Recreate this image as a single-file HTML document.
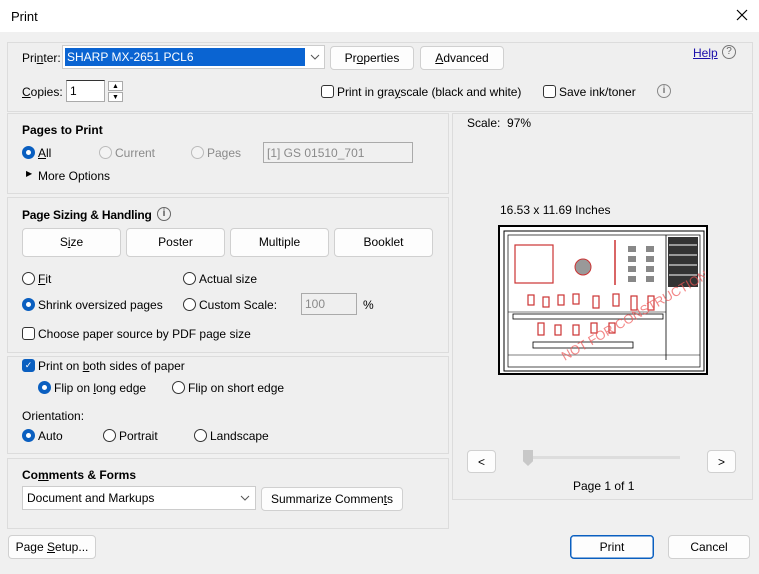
<!DOCTYPE html><html><head><style>
*{box-sizing:border-box}
body{margin:0;width:759px;height:574px;background:#f0f0f0;font-family:"Liberation Sans",sans-serif;font-size:12px;color:#000;position:relative;overflow:hidden}
.a{position:absolute;white-space:nowrap}
.panel{position:absolute;border:1px solid #dcdcdc;background:#efefef}
.btn{position:absolute;background:#fdfdfd;border:1px solid #d0d0d0;border-radius:4px;text-align:center;line-height:22px}
.rad{position:absolute;width:13px;height:13px;border:1px solid #333;border-radius:50%;background:#fff}
.rad.on{background:#0a5fc0;border-color:#0a5fc0}
.rad.on:after{content:"";position:absolute;left:3px;top:3px;width:5px;height:5px;border-radius:50%;background:#fff}
.rad.dis{border-color:#bbb;background:#f3f3f3}
.cb{position:absolute;width:13px;height:13px;border:1px solid #333;border-radius:3px;background:#fff}
.b{font-weight:bold}
.g{color:#8a8a8a}
u{text-decoration:underline}
</style></head><body>
<div class="a" style="left:0;top:0;width:759px;height:32px;background:#fff"></div>
<div class="a" style="left:11px;top:9px;font-size:13px">Print</div>
<svg class="a" style="left:736px;top:9px" width="12" height="12"><path d="M1 1L11 11M11 1L1 11" stroke="#000" stroke-width="1.2"/></svg>

<div class="panel" style="left:7px;top:42px;width:746px;height:70px"></div>
<div class="a" style="left:22px;top:51px">Pri<u>n</u>ter:</div>
<div class="a" style="left:62px;top:45px;width:263px;height:24px;background:#fff;border:1px solid #ccc"></div>
<div class="a" style="left:65px;top:48px;width:240px;height:18px;background:#0a64d2;color:#fff;padding-left:2px;line-height:18px">SHARP MX-2651 PCL6</div>
<svg class="a" style="left:310px;top:54px" width="10" height="6"><path d="M1 1L5 5L9 1" stroke="#555" fill="none"/></svg>
<div class="btn" style="left:330px;top:46px;width:84px;height:24px">Pr<u>o</u>perties</div>
<div class="btn" style="left:420px;top:46px;width:84px;height:24px"><u>A</u>dvanced</div>
<div class="a" style="left:693px;top:46px;color:#1a0dab;text-decoration:underline">Help</div>
<div class="a" style="left:722px;top:45px;width:14px;height:14px;border:1px solid #777;border-radius:50%;font-size:10px;text-align:center;line-height:12px;color:#666">?</div>
<div class="a" style="left:22px;top:85px"><u>C</u>opies:</div>
<div class="a" style="left:66px;top:80px;width:39px;height:22px;background:#fff;border:1px solid #aaa;border-top-color:#333;padding:3px">1</div>
<div class="a" style="left:108px;top:81px;width:15px;height:10px;border:1px solid #aaa;background:#fff;font-size:7px;text-align:center;line-height:9px">▲</div>
<div class="a" style="left:108px;top:92px;width:15px;height:10px;border:1px solid #aaa;background:#fff;font-size:7px;text-align:center;line-height:9px">▼</div>
<div class="cb" style="left:321px;top:85px"></div>
<div class="a" style="left:337px;top:85px;letter-spacing:-0.05px">Print in gra<u>y</u>scale (black and white)</div>
<div class="cb" style="left:543px;top:85px"></div>
<div class="a" style="left:559px;top:85px">Save ink/toner</div>
<div class="a" style="left:657px;top:84px;width:14px;height:14px;border:1px solid #888;border-radius:50%;font-size:10px;text-align:center;line-height:12px;color:#777;font-weight:bold">i</div>

<div class="panel" style="left:7px;top:113px;width:442px;height:81px"></div>
<div class="a b" style="left:22px;top:123px">Pages to Print</div>
<div class="rad on" style="left:22px;top:146px"></div><div class="a" style="left:38px;top:146px"><u>A</u>ll</div>
<div class="rad dis" style="left:99px;top:146px"></div><div class="a g" style="left:115px;top:146px">Current</div>
<div class="rad dis" style="left:191px;top:146px"></div><div class="a g" style="left:207px;top:146px">Pages</div>
<div class="a g" style="left:263px;top:142px;width:150px;height:21px;border:1px solid #aaa;background:#f0f0f0;padding:3px 3px">[1] GS 01510_701</div>
<div class="a" style="left:26px;top:169px;font-size:8px">▶</div><div class="a" style="left:38px;top:169px">More Options</div>

<div class="panel" style="left:7px;top:197px;width:442px;height:156px"></div>
<div class="a b" style="left:22px;top:208px;letter-spacing:-0.2px">Page Sizing &amp; Handling</div>
<div class="a" style="left:157px;top:207px;width:14px;height:14px;border:1px solid #666;border-radius:50%;font-size:10px;text-align:center;line-height:12px;font-weight:bold;color:#555">i</div>
<div class="btn" style="left:22px;top:228px;width:99px;height:29px;line-height:27px">S<u>i</u>ze</div>
<div class="btn" style="left:126px;top:228px;width:99px;height:29px;line-height:27px">Poster</div>
<div class="btn" style="left:230px;top:228px;width:99px;height:29px;line-height:27px">Multiple</div>
<div class="btn" style="left:334px;top:228px;width:99px;height:29px;line-height:27px">Booklet</div>
<div class="rad" style="left:22px;top:272px"></div><div class="a" style="left:38px;top:272px"><u>F</u>it</div>
<div class="rad" style="left:183px;top:272px"></div><div class="a" style="left:199px;top:272px">Actual size</div>
<div class="rad on" style="left:22px;top:298px"></div><div class="a" style="left:38px;top:298px">Shrink oversized pages</div>
<div class="rad" style="left:183px;top:298px"></div><div class="a" style="left:199px;top:298px">Custom Scale:</div>
<div class="a g" style="left:301px;top:293px;width:56px;height:22px;border:1px solid #aaa;padding:3px">100</div>
<div class="a" style="left:363px;top:298px">%</div>
<div class="cb" style="left:22px;top:327px"></div><div class="a" style="left:38px;top:327px">Choose paper source by PDF page size</div>

<div class="panel" style="left:7px;top:356px;width:442px;height:98px"></div>
<div class="cb" style="left:22px;top:359px;background:#0a5fc0;border-color:#0a5fc0;color:#fff;font-size:9px;line-height:11px;text-align:center">✓</div>
<div class="a" style="left:38px;top:359px">Print on <u>b</u>oth sides of paper</div>
<div class="rad on" style="left:38px;top:381px"></div><div class="a" style="left:54px;top:381px">Flip on <u>l</u>ong edge</div>
<div class="rad" style="left:172px;top:381px"></div><div class="a" style="left:188px;top:381px">Flip on short edge</div>
<div class="a" style="left:22px;top:409px">Orientation:</div>
<div class="rad on" style="left:22px;top:429px"></div><div class="a" style="left:38px;top:429px">Auto</div>
<div class="rad" style="left:103px;top:429px"></div><div class="a" style="left:119px;top:429px">Portrait</div>
<div class="rad" style="left:194px;top:429px"></div><div class="a" style="left:210px;top:429px">Landscape</div>

<div class="panel" style="left:7px;top:458px;width:442px;height:71px"></div>
<div class="a b" style="left:22px;top:468px">Co<u>m</u>ments &amp; Forms</div>
<div class="a" style="left:22px;top:486px;width:234px;height:24px;background:#fff;border:1px solid #ccc;padding:4px 4px">Document and Markups</div>
<svg class="a" style="left:240px;top:495px" width="10" height="6"><path d="M1 1L5 5L9 1" stroke="#555" fill="none"/></svg>
<div class="btn" style="left:261px;top:487px;width:142px;height:24px">Summarize Commen<u>t</u>s</div>

<div class="panel" style="left:452px;top:113px;width:301px;height:387px"></div>
<div class="a" style="left:467px;top:116px">Scale:&nbsp; 97%</div>
<div class="a" style="left:500px;top:203px">16.53 x 11.69 Inches</div>
<div class="a" style="left:498px;top:225px;width:210px;height:150px;border:2px solid #000;background:#fff;padding:3px">
<svg width="202" height="142" viewBox="0 0 202 142" style="display:block">
<rect x="1" y="1" width="200" height="140" fill="none" stroke="#000"/>
<rect x="5" y="5" width="192" height="132" fill="none" stroke="#000" stroke-width="0.7"/>
<line x1="163" y1="5" x2="163" y2="130" stroke="#000" stroke-width="0.8"/>
<rect x="165" y="7" width="30" height="50" fill="#333"/>
<g stroke="#fff" stroke-width="1"><line x1="166" y1="15" x2="194" y2="15"/><line x1="166" y1="25" x2="194" y2="25"/><line x1="166" y1="35" x2="194" y2="35"/><line x1="166" y1="45" x2="194" y2="45"/></g>
<line x1="5" y1="82" x2="163" y2="82" stroke="#000" stroke-width="0.6"/>
<line x1="5" y1="125" x2="197" y2="125" stroke="#000" stroke-width="0.6"/>
<rect x="12" y="15" width="38" height="38" fill="none" stroke="#c33" stroke-width="1.2"/>
<circle cx="80" cy="37" r="8" fill="#999" stroke="#c33"/>
<g fill="#888"><rect x="125" y="16" width="8" height="6"/><rect x="125" y="26" width="8" height="6"/><rect x="125" y="36" width="8" height="6"/><rect x="125" y="46" width="8" height="6"/><rect x="143" y="16" width="8" height="6"/><rect x="143" y="26" width="8" height="6"/><rect x="143" y="36" width="8" height="6"/><rect x="143" y="46" width="8" height="6"/></g>
<line x1="112" y1="10" x2="112" y2="55" stroke="#c33" stroke-width="1.5"/>
<g fill="none" stroke="#c33" stroke-width="1.2"><rect x="25" y="65" width="6" height="10"/><rect x="40" y="67" width="6" height="10"/><rect x="55" y="65" width="6" height="10"/><rect x="70" y="64" width="6" height="10"/><rect x="90" y="66" width="6" height="12"/><rect x="110" y="64" width="6" height="12"/><rect x="128" y="66" width="6" height="14"/><rect x="145" y="66" width="6" height="14"/>
<rect x="35" y="93" width="6" height="12"/><rect x="52" y="95" width="6" height="10"/><rect x="70" y="95" width="6" height="10"/><rect x="88" y="93" width="6" height="10"/><rect x="106" y="93" width="6" height="10"/></g>
<g fill="none" stroke="#000" stroke-width="0.8"><rect x="10" y="84" width="150" height="5"/><rect x="30" y="112" width="100" height="6"/></g>
<text x="40" y="110" transform="rotate(-30 90 80)" font-size="13" fill="#e55" opacity="0.7" font-family="Liberation Sans">NOT FOR CONSTRUCTION</text>
</svg></div>
<div class="btn" style="left:467px;top:450px;width:29px;height:23px">&lt;</div>
<div class="btn" style="left:707px;top:450px;width:29px;height:23px">&gt;</div>
<div class="a" style="left:528px;top:456px;width:152px;height:3px;background:#ddd"></div>
<div class="a" style="left:523px;top:450px;width:10px;height:16px;background:#c8c8c8;clip-path:polygon(0 0,100% 0,100% 70%,50% 100%,0 70%)"></div>
<div class="a" style="left:573px;top:479px">Page 1 of 1</div>

<div class="btn" style="left:8px;top:535px;width:88px;height:24px">Page <u>S</u>etup...</div>
<div class="btn" style="left:570px;top:535px;width:84px;height:24px;border:1px solid #0a5fc0;box-shadow:inset 0 0 0 0.5px #0a5fc0">Print</div>
<div class="btn" style="left:668px;top:535px;width:82px;height:24px">Cancel</div>
</body></html>
